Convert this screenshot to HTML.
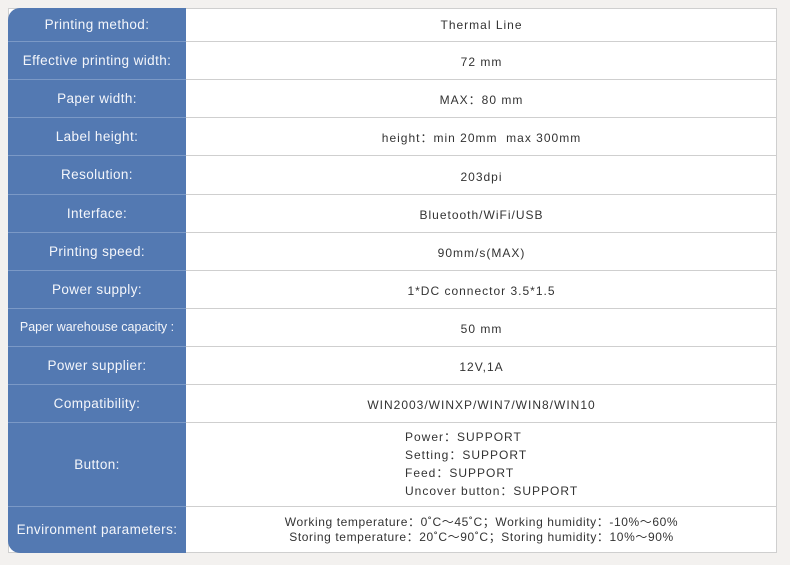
<!DOCTYPE html>
<html><head><style>
body{margin:0;width:790px;height:565px;background:#f3f1ef;position:relative;overflow:hidden;font-family:"Liberation Sans",sans-serif}
.t{position:absolute;left:8px;top:8px;width:769px;height:545px;background:#fff;border:1px solid #cfcfcf;box-sizing:border-box}
.l{position:absolute;left:8px;top:8px;width:178px;height:545px;background:#5379b2;border-radius:12px 0 0 12px}
.r{position:absolute;left:8px;width:769px;display:flex;align-items:center;box-sizing:border-box}
.r .a{width:178px;text-align:center;color:#f4f6fb;font-size:13.5px;letter-spacing:0.4px}
.r .b{flex:1;text-align:center;color:#333;font-size:12px;line-height:16px;letter-spacing:1px;padding-top:4px}
.hl{position:absolute;left:8px;width:178px;height:1px;background:#7b99c6}
.hr{position:absolute;left:186px;width:591px;height:1px;background:#cfcfcf}
</style></head><body>
<div class="t"></div><div class="l"></div>
<div class="r" style="top:8px;height:33px"><div class="a">Printing method:</div><div class="b" style="padding-top:0">Thermal Line</div></div>
<div class="r" style="top:41px;height:38px"><div class="a">Effective printing width:</div><div class="b">72 mm</div></div>
<div class="r" style="top:79px;height:38px"><div class="a">Paper width:</div><div class="b">MAX：80 mm</div></div>
<div class="r" style="top:117px;height:38px"><div class="a">Label height:</div><div class="b">height：min 20mm &nbsp;max 300mm</div></div>
<div class="r" style="top:155px;height:39px"><div class="a">Resolution:</div><div class="b">203dpi</div></div>
<div class="r" style="top:194px;height:38px"><div class="a">Interface:</div><div class="b">Bluetooth/WiFi/USB</div></div>
<div class="r" style="top:232px;height:38px"><div class="a">Printing speed:</div><div class="b">90mm/s(MAX)</div></div>
<div class="r" style="top:270px;height:38px"><div class="a">Power supply:</div><div class="b">1*DC connector 3.5*1.5</div></div>
<div class="r" style="top:308px;height:38px"><div class="a" style="font-size:12.5px;letter-spacing:0">Paper warehouse capacity :</div><div class="b">50 mm</div></div>
<div class="r" style="top:346px;height:38px"><div class="a">Power supplier:</div><div class="b">12V,1A</div></div>
<div class="r" style="top:384px;height:38px"><div class="a">Compatibility:</div><div class="b">WIN2003/WINXP/WIN7/WIN8/WIN10</div></div>
<div class="r" style="top:422px;height:84px"><div class="a">Button:</div><div class="b" style="text-align:left;padding-left:219px;line-height:18px;padding-top:0">Power：SUPPORT<br>Setting：SUPPORT<br>Feed：SUPPORT<br>Uncover button：SUPPORT</div></div>
<div class="r" style="top:506px;height:47px"><div class="a">Environment parameters:</div><div class="b" style="line-height:15px;letter-spacing:0.6px;padding-top:0">Working temperature：0˚C～45˚C；Working humidity：-10%～60%<br>Storing temperature：20˚C～90˚C；Storing humidity：10%～90%</div></div>
<div class="hl" style="top:41px"></div><div class="hr" style="top:41px"></div>
<div class="hl" style="top:79px"></div><div class="hr" style="top:79px"></div>
<div class="hl" style="top:117px"></div><div class="hr" style="top:117px"></div>
<div class="hl" style="top:155px"></div><div class="hr" style="top:155px"></div>
<div class="hl" style="top:194px"></div><div class="hr" style="top:194px"></div>
<div class="hl" style="top:232px"></div><div class="hr" style="top:232px"></div>
<div class="hl" style="top:270px"></div><div class="hr" style="top:270px"></div>
<div class="hl" style="top:308px"></div><div class="hr" style="top:308px"></div>
<div class="hl" style="top:346px"></div><div class="hr" style="top:346px"></div>
<div class="hl" style="top:384px"></div><div class="hr" style="top:384px"></div>
<div class="hl" style="top:422px"></div><div class="hr" style="top:422px"></div>
<div class="hl" style="top:506px"></div><div class="hr" style="top:506px"></div>
</body></html>
